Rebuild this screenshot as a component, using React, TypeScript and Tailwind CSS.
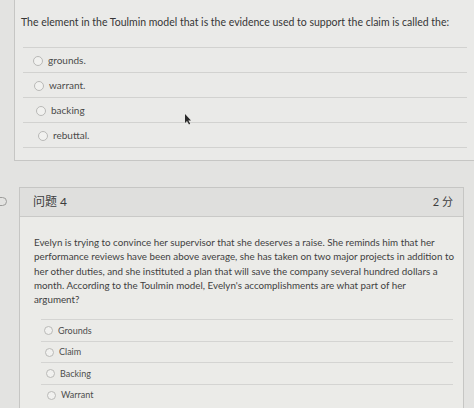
const first = [
  { label: "grounds.", pl: "pl-[10px]" },
  { label: "warrant.", pl: "pl-[11px]" },
  { label: "backing", pl: "pl-[13px]" },
  { label: "rebuttal.", pl: "pl-[15px]" },
];

const second = [
  { label: "Grounds", pl: "pl-[3px]" },
  { label: "Claim", pl: "pl-[4px]" },
  { label: "Backing", pl: "pl-[5px]" },
  { label: "Warrant", pl: "pl-[6px]" },
];

function Radio({ size = "h-[10px] w-[10px]" }: { size?: string }) {
  return (
    <span
      className={`${size} shrink-0 rounded-full border border-[#b9b9b7] bg-[#f1f1ef]`}
    />
  );
}

export default function App() {
  return (
    <div className="relative h-[408px] w-[474px] overflow-hidden bg-[#e3e3e1] font-['Lato','Noto_Sans_CJK_SC',sans-serif] text-[#3b3b3b]">
      {/* question 3 (top cut off) */}
      <div className="ml-[14px] h-[161px] w-[480px] border-b border-l border-[#c6c6c4] bg-[#eaeae8]">
        <p className="pl-[6px] pt-[15px] text-[10.5px] leading-[14px] text-[#363636]">
          The element in the Toulmin model that is the evidence used to support the claim is called the:
        </p>
        <div className="ml-[8px] mt-[18px] w-[444px]">
          {first.map((o) => (
            <div
              key={o.label}
              className={`flex h-[25px] items-center gap-[5px] border-t border-[#d2d2d0] ${o.pl} pt-[1px]`}
            >
              <Radio />
              <span className="text-[10px] text-[#4a4a4a]">{o.label}</span>
            </div>
          ))}
          <div className="border-t border-[#d2d2d0]" />
        </div>
      </div>

      {/* question 4 */}
      <div className="relative ml-[19px] mt-[26px] w-[445px] border border-[#c6c6c4] bg-[#ebebe8]">
        <span className="absolute left-[-28px] top-[9px] h-[9px] w-[15px] rounded-r-full border border-[#9c9c9a]" />
        <div className="flex h-[29px] items-center justify-between border-b border-[#c9c9c7] bg-[#dfdfdd] pl-[13px] pr-[10px] text-[12px] text-[#3d3d3d]">
          <span>问题 4</span>
          <span className="text-[11px]">2 分</span>
        </div>
        <p className="pl-[14px] pr-[2px] pt-[18px] text-[9.8px] leading-[14.3px] text-[#3f3f3f]">
          Evelyn is trying to convince her supervisor that she deserves a raise. She reminds him that her performance reviews have been above average, she has taken on two major projects in addition to her other duties, and she instituted a plan that will save the company several hundred dollars a month. According to the Toulmin model, Evelyn's accomplishments are what part of her
          <br />
          argument?
        </p>
        <div className="ml-[21px] mt-[13px] w-[412px]">
          {second.map((o) => (
            <div
              key={o.label}
              className={`flex h-[21.5px] items-center gap-[5px] border-t border-[#d4d4d2] ${o.pl}`}
            >
              <Radio size="h-[9px] w-[9px]" />
              <span className="text-[9px] text-[#4d4d4d]">{o.label}</span>
            </div>
          ))}
          <div className="h-[40px]" />
        </div>
      </div>

      {/* mouse pointer */}
      <svg
        className="absolute left-[184px] top-[114px]"
        width="8"
        height="11"
        viewBox="0 0 8 11"
      >
        <path d="M1 0 L1 9 L3 7 L5 10.5 L6.2 9.8 L4.3 6.6 L7 6.4 Z" fill="#2a2a2a" />
      </svg>
    </div>
  );
}
